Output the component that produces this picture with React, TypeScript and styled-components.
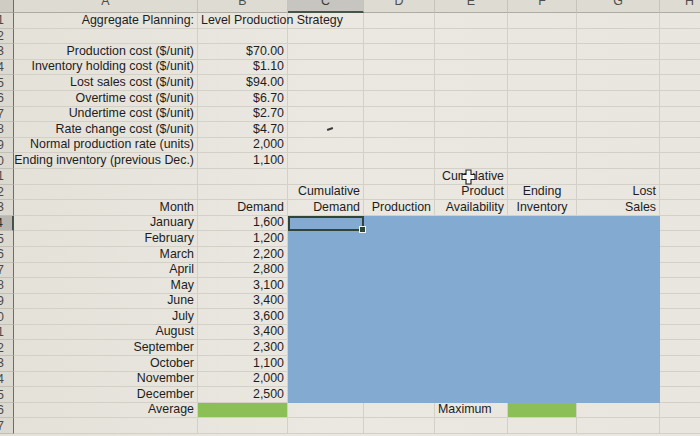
import React from "react";
import styled, { createGlobalStyle, css } from "styled-components";

const Global = createGlobalStyle`
  html, body {
    margin: 0;
    padding: 0;
    background: #e7e4dc;
    overflow: hidden;
  }
  body {
    font-family: "Liberation Sans", Arial, sans-serif;
    color: #1d1d1d;
  }
`;

const LINE = "#d3d0c8";
const BLUE = "#83aad0";
const GREEN = "#8cbf55";

const Sheet = styled.div`
  position: relative;
  display: grid;
  grid-template-columns: 14px 184px 90px 76px 71px 73px 69px 83px 60px;
  grid-template-rows: 13px;
  grid-auto-rows: 15.6px;
  width: 720px;
  height: 436px;
  overflow: hidden;
  background: linear-gradient(90deg, #e4e1d9 0%, #ebe8e1 45%, #e9e6df 100%);
`;

const Corner = styled.div`
  background: #cfccc4;
  border-right: 1.5px solid #6d6c67;
  border-bottom: 1px solid #a9a69f;
  box-sizing: border-box;
`;

const ColHead = styled.div<{ $selected?: boolean }>`
  box-sizing: border-box;
  overflow: hidden;
  display: flex;
  align-items: flex-end;
  justify-content: center;
  font-size: 12.4px;
  line-height: 1;
  color: #4e4e4c;
  padding-bottom: 5px;
  background: #dedbd3;
  border-right: 1px solid #c6c3bb;
  border-bottom: 1px solid #aeaba4;
  ${(p) =>
    p.$selected &&
    css`
      background: #c7c5bf;
      color: #3a3a38;
      border-bottom: 2px solid #44544a;
      padding-bottom: 4px;
    `}
`;

const RowHead = styled.div<{ $selected?: boolean }>`
  box-sizing: border-box;
  overflow: hidden;
  display: flex;
  align-items: center;
  justify-content: flex-end;
  padding-right: 9px;
  font-size: 12.4px;
  color: #4a4a48;
  background: #dcd9d1;
  border-right: 1.5px solid #6d6c67;
  border-bottom: 1px solid #c2bfb7;
  white-space: nowrap;
  ${(p) =>
    p.$selected &&
    css`
      background: #b9b7b1;
      color: #2f2f2d;
      border-right: 2px solid #44544a;
    `}
`;

type Fill = "blue" | "green" | undefined;
type Align = "left" | "right" | "center";

const Cell = styled.div<{ $align: Align; $fill: Fill; $overflow?: boolean }>`
  position: relative;
  box-sizing: border-box;
  display: flex;
  align-items: center;
  font-size: 12.4px;
  line-height: 1;
  white-space: nowrap;
  overflow: ${(p) => (p.$overflow ? "visible" : "hidden")};
  z-index: ${(p) => (p.$overflow ? 1 : 0)};
  padding: 0 3px 1px;
  justify-content: ${(p) =>
    p.$align === "right" ? "flex-end" : p.$align === "center" ? "center" : "flex-start"};
  background: ${(p) => (p.$fill === "blue" ? BLUE : p.$fill === "green" ? GREEN : "transparent")};
  border-right: 1px solid
    ${(p) => (p.$fill === "blue" ? BLUE : LINE)};
  border-bottom: 1px solid
    ${(p) => (p.$fill === "blue" ? BLUE : LINE)};
`;

const SelectBox = styled.div`
  position: absolute;
  inset: 0 -1px -1px 0;
  border: 2px solid #2f4636;
  pointer-events: none;
`;

const Handle = styled.div`
  position: absolute;
  right: -4px;
  bottom: -4px;
  width: 5px;
  height: 5px;
  background: #2f4636;
  border: 1px solid #f2f2f0;
`;

const Mark = styled.span`
  display: inline-block;
  width: 6px;
  height: 2px;
  background: #3a3a38;
  transform: rotate(-18deg);
  margin-left: 8px;
`;

const Dot = styled.span`
  display: inline-block;
  width: 2px;
  height: 3px;
  background: #555;
  border-radius: 1px;
  margin-top: -12px;
  margin-right: 8px;
`;

const CursorWrap = styled.div`
  position: absolute;
  left: 461px;
  top: 169px;
  width: 15px;
  height: 16px;
  z-index: 5;
`;

const COLS = ["A", "B", "C", "D", "E", "F", "G", "H"];

type CellDef = { text?: React.ReactNode; align?: Align; overflow?: boolean };

const defs: Record<string, CellDef> = {
  A1: { text: "Aggregate Planning:", align: "right" },
  B1: { text: "Level Production Strategy", align: "left", overflow: true },
  C8: { text: <Mark />, align: "center" },
  C12: { text: "Cumulative", align: "right" },
  C13: { text: "Demand", align: "right" },
  A13: { text: "Month", align: "right" },
  B13: { text: "Demand", align: "right" },
  D13: { text: "Production", align: "right" },
  E11: { text: "Cumulative", align: "right" },
  E12: { text: "Product", align: "right" },
  E13: { text: "Availability", align: "right" },
  F12: { text: "Ending", align: "center" },
  F13: { text: "Inventory", align: "center" },
  G12: { text: "Lost", align: "right" },
  G13: { text: "Sales", align: "right" },
  A26: { text: "Average", align: "right" },
  E26: { text: "Maximum", align: "left" },
  H25: { text: <Dot />, align: "right" },
};

const costs: [string, string][] = [
  ["Production cost ($/unit)", "$70.00"],
  ["Inventory holding cost ($/unit)", "$1.10"],
  ["Lost sales cost ($/unit)", "$94.00"],
  ["Overtime cost ($/unit)", "$6.70"],
  ["Undertime cost ($/unit)", "$2.70"],
  ["Rate change cost ($/unit)", "$4.70"],
  ["Normal production rate (units)", "2,000"],
  ["Ending inventory (previous Dec.)", "1,100"],
];
costs.forEach(([label, value], i) => {
  defs[`A${i + 3}`] = { text: label, align: "right" };
  defs[`B${i + 3}`] = { text: value, align: "right" };
});

const months: [string, string][] = [
  ["January", "1,600"],
  ["February", "1,200"],
  ["March", "2,200"],
  ["April", "2,800"],
  ["May", "3,100"],
  ["June", "3,400"],
  ["July", "3,600"],
  ["August", "3,400"],
  ["September", "2,300"],
  ["October", "1,100"],
  ["November", "2,000"],
  ["December", "2,500"],
];
months.forEach(([m, d], i) => {
  defs[`A${i + 14}`] = { text: m, align: "right" };
  defs[`B${i + 14}`] = { text: d, align: "right" };
});

function fillFor(col: string, row: number): Fill {
  const ci = COLS.indexOf(col);
  if (row >= 14 && row <= 25 && ci >= 2 && ci <= 6) return "blue";
  if (row === 26 && (col === "B" || col === "F")) return "green";
  return undefined;
}

const ROWS = 27;

const CrossCursor = () => (
  <svg width="15" height="16" viewBox="0 0 15 16">
    <path
      d="M5 1 H10 V5.5 H14 V10.5 H10 V15 H5 V10.5 H1 V5.5 H5 Z"
      fill="#f7f7f5"
      stroke="#1c1c1c"
      strokeWidth="1.1"
    />
  </svg>
);

export default function App() {
  const cells: React.ReactNode[] = [];
  cells.push(<Corner key="corner" />);
  COLS.forEach((c) => (
    cells.push(
      <ColHead key={`h${c}`} $selected={c === "C"}>
        {c}
      </ColHead>
    )
  ));
  for (let r = 1; r <= ROWS; r++) {
    cells.push(
      <RowHead key={`r${r}`} $selected={r === 14}>
        {r}
      </RowHead>
    );
    COLS.forEach((c) => {
      const key = `${c}${r}`;
      const d = defs[key] || {};
      const selected = key === "C14";
      cells.push(
        <Cell key={key} $align={d.align || "left"} $fill={fillFor(c, r)} $overflow={d.overflow || selected}>
          {d.text}
          {selected && (
            <SelectBox>
              <Handle />
            </SelectBox>
          )}
        </Cell>
      );
    });
  }
  return (
    <>
      <Global />
      <Sheet>
        {cells}
        <CursorWrap>
          <CrossCursor />
        </CursorWrap>
      </Sheet>
    </>
  );
}
